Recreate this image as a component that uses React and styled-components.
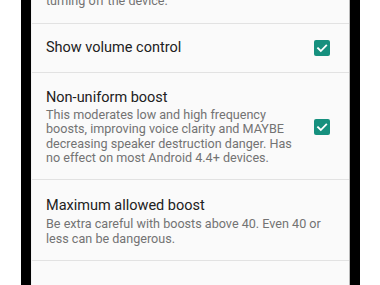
import React from "react";
import styled, { createGlobalStyle } from "styled-components";

const Global = createGlobalStyle`
  html, body { margin: 0; padding: 0; background: #ffffff; }
  body { font-family: Roboto, "Noto Sans", sans-serif; -webkit-font-smoothing: antialiased; }
`;

const Page = styled.div`
  width: 380px;
  height: 285px;
  overflow: hidden;
  display: flex;
  background: #ffffff;
`;

const Frame = styled.div`
  margin-left: 21px;
  width: 339px;
  height: 285px;
  box-sizing: border-box;
  padding: 0 10px;
  background: #000000;
  display: flex;
`;

const Panel = styled.div`
  flex: 1;
  background: #fafafa;
  border-left: 1px solid #f2f2f2;
  border-right: 1px solid #b8b8b8;
  display: flex;
  flex-direction: column;
  overflow: hidden;
`;

const Item = styled.div`
  display: flex;
  align-items: center;
  gap: 16px;
  padding: ${(p) => p.$top ?? 15}px 19px ${(p) => p.$bottom ?? 13}px 14px;
  border-bottom: 1px solid #e2e2e2;
  flex-shrink: 0;
`;

const Texts = styled.div`
  flex: 1;
  display: flex;
  flex-direction: column;
  min-width: 0;
`;

const Title = styled.div`
  font-size: 14.5px;
  line-height: 20px;
  color: #212121;
`;

const Summary = styled.div`
  font-size: 12.6px;
  line-height: 14.6px;
  color: #737373;
  margin-top: ${(p) => p.$offset || 0}px;
`;

const Box = styled.div`
  width: 16px;
  height: 16px;
  border-radius: 2px;
  background: #16907e;
  display: flex;
  align-items: center;
  justify-content: center;
  flex-shrink: 0;
`;

const Check = () => (
  <Box>
    <svg width="12" height="12" viewBox="0 0 12 12" fill="none">
      <path d="M2 6.2 L4.8 9 L10.2 3.4" stroke="#ffffff" strokeWidth="1.8" strokeLinecap="square" />
    </svg>
  </Box>
);

export default function App() {
  return (
    <>
      <Global />
      <Page>
        <Frame>
          <Panel>
            <Item $top={0} $bottom={14}>
              <Texts>
                <Summary $offset={-6}>turning off the device.</Summary>
              </Texts>
            </Item>
            <Item $top={14} $bottom={14}>
              <Texts>
                <Title>Show volume control</Title>
              </Texts>
              <Check />
            </Item>
            <Item>
              <Texts>
                <Title>Non-uniform boost</Title>
                <Summary>
                  This moderates low and high frequency boosts, improving voice clarity and MAYBE
                  decreasing speaker destruction danger. Has no effect on most Android 4.4+ devices.
                </Summary>
              </Texts>
              <Check />
            </Item>
            <Item $top={16} $bottom={14}>
              <Texts>
                <Title>Maximum allowed boost</Title>
                <Summary $offset={1}>
                  Be extra careful with boosts above 40. Even 40 or less can be dangerous.
                </Summary>
              </Texts>
            </Item>
          </Panel>
        </Frame>
      </Page>
    </>
  );
}
